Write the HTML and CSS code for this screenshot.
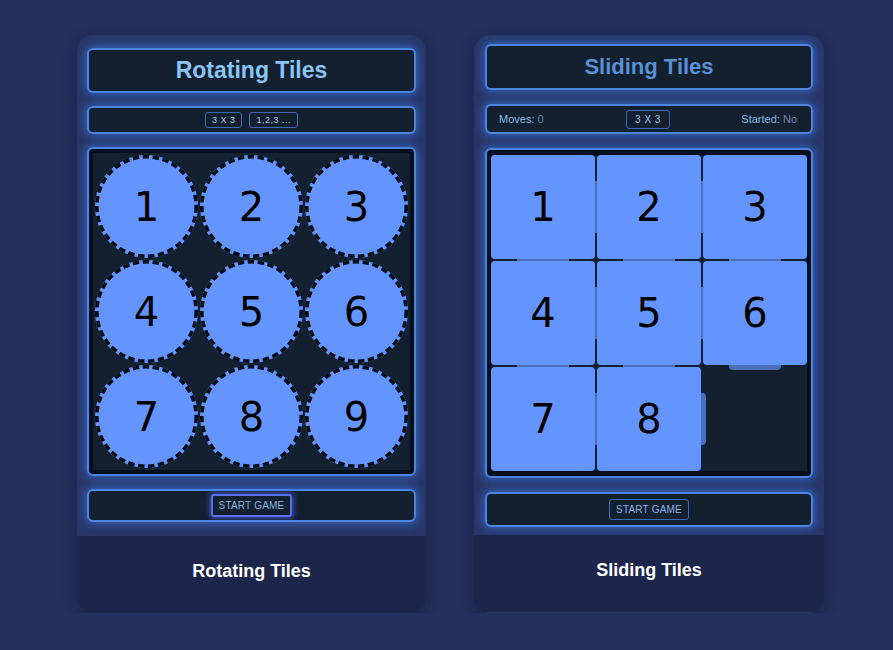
FILE: index.html
```html
<!DOCTYPE html>
<html>
<head>
  <title>Tile Games</title>
  <link rel="stylesheet" href="styles.css">
</head>
<body>
  <div class="page">
    <div class="card rotating">
      <div class="game">
        <div class="panel title-panel"><h2 class="title big">Rotating Tiles</h2></div>
        <div class="panel controls centered">
          <button class="chip">3 X 3</button>
          <button class="chip">1,2,3 ...</button>
        </div>
        <div class="panel board">
          <div class="grid circles">
            <div class="circle"><svg class="ring" viewBox="0 0 103 103"><circle cx="51.5" cy="51.5" r="49.7"/></svg>1</div>
            <div class="circle"><svg class="ring" viewBox="0 0 103 103"><circle cx="51.5" cy="51.5" r="49.7"/></svg>2</div>
            <div class="circle"><svg class="ring" viewBox="0 0 103 103"><circle cx="51.5" cy="51.5" r="49.7"/></svg>3</div>
            <div class="circle"><svg class="ring" viewBox="0 0 103 103"><circle cx="51.5" cy="51.5" r="49.7"/></svg>4</div>
            <div class="circle"><svg class="ring" viewBox="0 0 103 103"><circle cx="51.5" cy="51.5" r="49.7"/></svg>5</div>
            <div class="circle"><svg class="ring" viewBox="0 0 103 103"><circle cx="51.5" cy="51.5" r="49.7"/></svg>6</div>
            <div class="circle"><svg class="ring" viewBox="0 0 103 103"><circle cx="51.5" cy="51.5" r="49.7"/></svg>7</div>
            <div class="circle"><svg class="ring" viewBox="0 0 103 103"><circle cx="51.5" cy="51.5" r="49.7"/></svg>8</div>
            <div class="circle"><svg class="ring" viewBox="0 0 103 103"><circle cx="51.5" cy="51.5" r="49.7"/></svg>9</div>
          </div>
        </div>
        <div class="panel start-row"><button class="start glow">START GAME</button></div>
      </div>
      <div class="card-footer">Rotating Tiles</div>
    </div>

    <div class="card sliding">
      <div class="game">
        <div class="panel title-panel"><h2 class="title dim">Sliding Tiles</h2></div>
        <div class="panel controls spread">
          <span class="stat">Moves: <b>0</b></span>
          <button class="chip wide">3 X 3</button>
          <span class="stat right">Started: <b>No</b></span>
        </div>
        <div class="panel board">
          <div class="grid squares">
            <div class="tile">1</div><div class="tile">2</div><div class="tile">3</div>
            <div class="tile">4</div><div class="tile">5</div><div class="tile">6</div>
            <div class="tile">7</div><div class="tile">8</div><div class="empty"></div>
          </div>
        </div>
        <div class="panel start-row"><button class="start">START GAME</button></div>
      </div>
      <div class="card-footer">Sliding Tiles</div>
    </div>
  </div>
</body>
</html>
```

FILE: styles.css
```css
body {
  margin: 0;
  background: #24305d;
  font-family: "Liberation Sans", Arial, sans-serif;
}
.page {
  display: flex;
  gap: 48px;
  padding: 35px 0 0 77px;
}
.card {
  width: 349px;
  background: #283768;
  border-radius: 16px;
  overflow: hidden;
  box-shadow: 0 4px 14px rgba(10, 16, 40, 0.35);
}
.sliding { width: 350px; }
.game {
  display: flex;
  flex-direction: column;
  padding: 13px 10px 14px;
}
.sliding .game { padding: 9px 11px 8px; }
.panel {
  background: #12202f;
  border: 2px solid #4c84e4;
  border-radius: 6px;
  box-shadow: 0 0 8px 2px rgba(59, 130, 246, 0.55);
  margin-bottom: 13px;
}
.sliding .panel { margin-bottom: 14px; }
.panel.start-row { margin-bottom: 0; }

.title-panel { height: 41px; display: flex; align-items: center; justify-content: center; }
.sliding .title-panel { height: 42px; }
.title { margin: 0; font-size: 22px; font-weight: bold; color: #8cc4f4; }
.title.big { font-size: 23px; }
.title.dim { color: #5b90d4; }

.controls { height: 24px; display: flex; align-items: center; }
.sliding .controls { height: 26px; }
.centered { justify-content: center; gap: 7px; }
.spread {
  display: grid;
  grid-template-columns: 1fr auto 1fr;
  align-items: center;
  padding: 0 14px 0 12px;
}
.chip {
  font-family: "Liberation Sans", Arial, sans-serif;
  font-size: 9px;
  letter-spacing: 0.5px;
  color: #a9c6ea;
  background: transparent;
  border: 1px solid #3d6ab8;
  border-radius: 3px;
  padding: 2px 6px;
}
.chip.wide { font-size: 10px; padding: 3px 8px; }
.stat { font-size: 11px; color: #8ab8ea; }
.stat.right { text-align: right; }
.stat b { font-weight: normal; color: #6f8cab; }

.board { background: #040f1d; padding: 4px; }
.sliding .board { padding: 5px 4px; }
.grid {
  display: grid;
  position: relative;
  z-index: 0;
  overflow: hidden;
}
.circles {
  grid-template-columns: repeat(3, 103px);
  grid-auto-rows: 103px;
  gap: 2px;
  padding: 2px;
  background: #13202f;
}
.circle {
  position: relative;
  background: #6495ff;
  border-radius: 50%;
  display: flex;
  align-items: center;
  justify-content: center;
  font-family: "DejaVu Sans", Verdana, sans-serif;
  font-size: 40px;
  color: #000;
}
.ring {
  position: absolute;
  inset: 0;
  width: 103px;
  height: 103px;
}
.ring circle {
  fill: none;
  stroke: #050d18;
  stroke-width: 3.6;
  stroke-dasharray: 6.5 3.5;
}
.squares {
  grid-template-columns: repeat(3, 104px);
  grid-auto-rows: 104px;
  gap: 2px;
  background: #13202f;
  margin: 0 auto;
}
.tile {
  position: relative;
  background: #6495ff;
  border-radius: 4px;
  display: flex;
  align-items: center;
  justify-content: center;
  font-family: "DejaVu Sans", Verdana, sans-serif;
  font-size: 40px;
  color: #000;
}
.tile::before, .tile::after {
  content: "";
  position: absolute;
  z-index: -1;
  background: #4a70b8;
  border-radius: 4px;
}
.tile::before { left: 26px; width: 52px; top: -5px; bottom: -5px; }
.tile::after { top: 26px; height: 52px; left: -5px; right: -5px; }

.start-row { height: 29px; display: flex; align-items: center; justify-content: center; }
.sliding .start-row { height: 31px; }
.start {
  font-family: "Liberation Sans", Arial, sans-serif;
  font-size: 10px;
  letter-spacing: 0.2px;
  color: #8ab4e0;
  background: transparent;
  border: 1px solid #3d6ab8;
  border-radius: 3px;
  padding: 4px 6px;
}
.start.glow {
  border: 2px solid #5a6ff0;
  box-shadow: 0 0 6px 1px rgba(90, 110, 255, 0.7);
  padding: 4px 6px;
}

.card-footer {
  background: #1c264a;
  height: 71px;
  padding-bottom: 6px;
  display: flex;
  align-items: center;
  justify-content: center;
  color: #fff;
  font-size: 18px;
  font-weight: bold;
}
```
